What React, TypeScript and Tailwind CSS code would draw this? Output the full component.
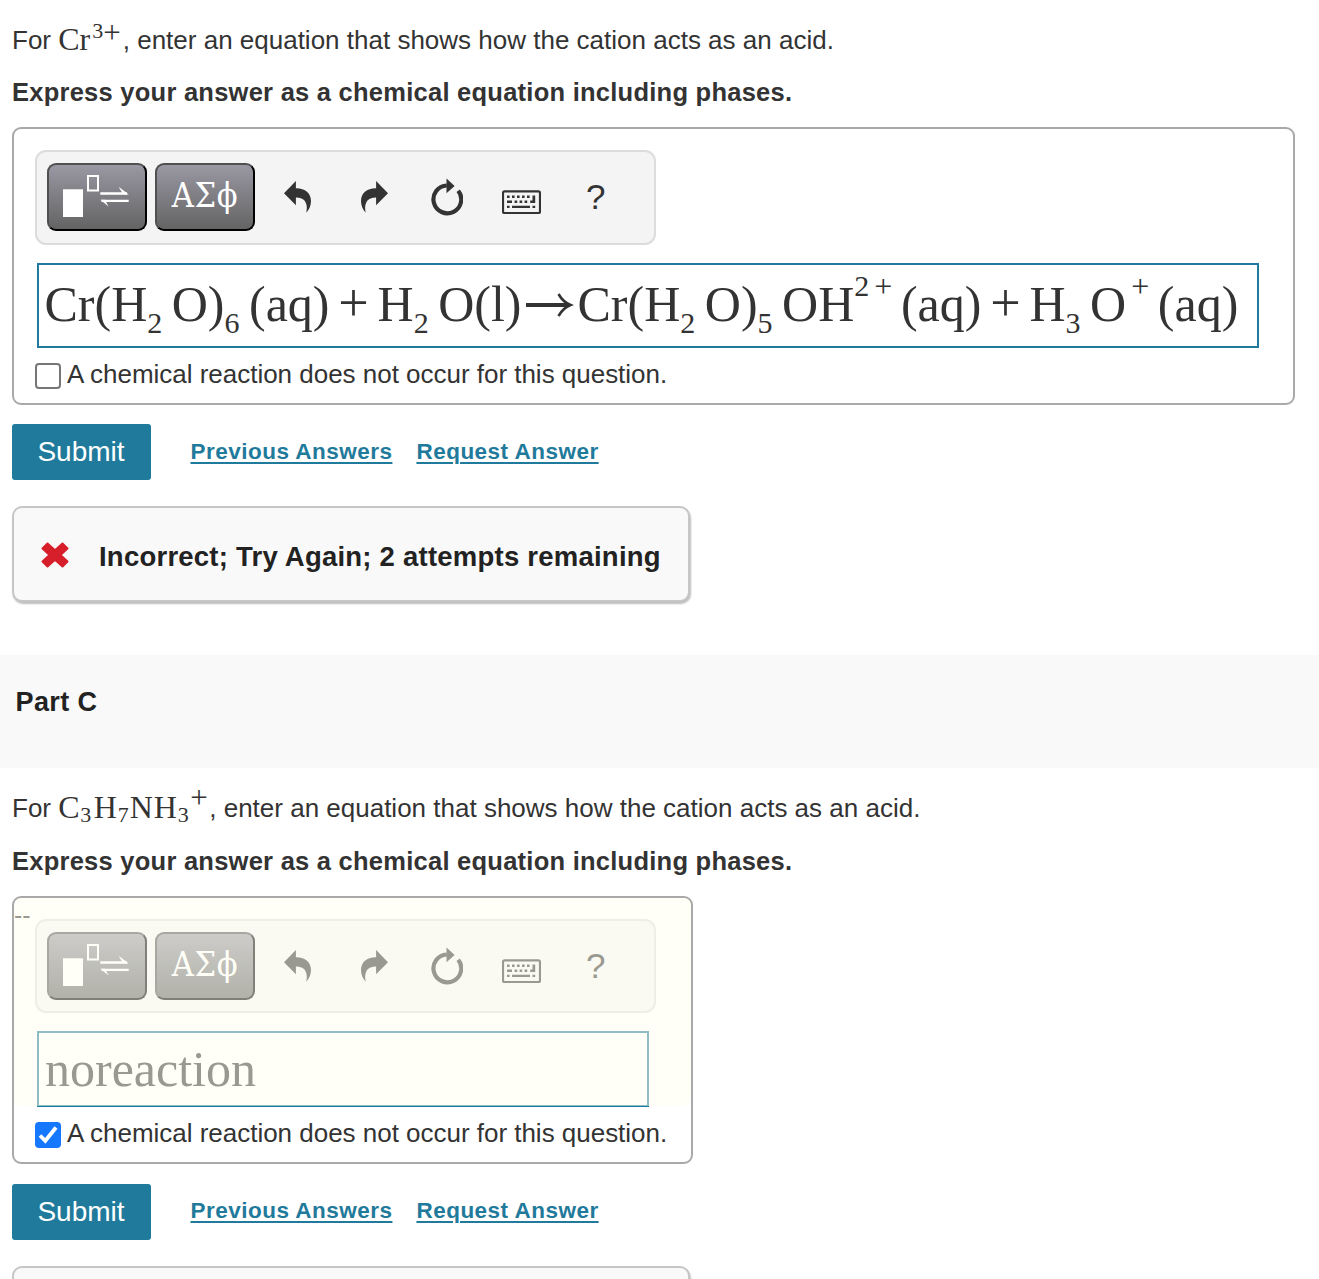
import React, { useState } from 'react';

const UndoIcon: React.FC<{ className?: string }> = ({ className }) => (
    <svg viewBox="0 0 27 32" className={className} fill="currentColor">
        <path d="M0 12.3 11.9 0V7.2C21 7 27 12 27 20c0 4.700-1.800 8.500-4.800 11.700C24 25 22.500 16 11.900 16.500V24.200Z" />
    </svg>
);

const ResetIcon: React.FC = () => (
    <svg viewBox="0 0 32 38" className="w-[32px] h-[38px] mt-[15px] ml-[43px]" fill="none">
        <path d="M15.800 7.500A13.900 13.900 0 1 0 27.200 12.700" stroke="currentColor" strokeWidth="4.200" />
        <path d="M15.500 .5 23.600 7.900 15.500 15.300Z" fill="currentColor" />
    </svg>
);

const KeyboardIcon: React.FC = () => (
    <svg viewBox="0 0 39 24" className="w-[39px] h-[24px] mt-[27px] ml-[38.500px]" fill="none">
        <rect x="1" y="1.300" width="37" height="21.700" rx="1.500" stroke="currentColor" strokeWidth="2.200" />
        <path
            d="M5 5.500h2.600v2.400H5zM10 5.500h2.600v2.400H10zM15 5.500h2.600v2.400H15zM20 5.500h2.600v2.400H20zM25 5.500h2.600v2.400H25zM30.500 5.500h2.700v7.500h-5v-2.400h2.300zM5 10.600h5v2.400H5zM12.600 10.600h2.600v2.400h-2.600zM17.600 10.600h2.600v2.400h-2.600zM22.600 10.600h2.600v2.400h-2.600zM5 15.700h2.600v2.400H5zM10 15.700h18v2.400H10zM30.500 15.700h2.700v2.400h-2.700z"
            fill="currentColor"
        />
    </svg>
);

const TemplateIcon: React.FC = () => (
    <svg viewBox="0 0 66 42" className="w-[66px] h-[42px] mt-[10px] ml-[14px] text-white" fill="none">
        <rect x="0" y="14.300" width="20" height="27.700" fill="currentColor" />
        <rect x="25" y="1" width="10" height="14.500" stroke="currentColor" strokeWidth="2" />
        <path d="M37.300 18.500H64M38.500 25.800H65.700" stroke="currentColor" strokeWidth="2.300" />
        <path d="M56 12 65.700 19.600H60.500L56.500 13.500ZM37.300 24.700 46.500 32.300 45.500 31.500 42 24.700Z" fill="currentColor" />
    </svg>
);

const toolButton =
    'flex shrink-0 w-[100px] h-[68px] rounded-[9px] border-2 border-t-[#505050] border-l-[#505050] border-r-black border-b-black bg-linear-to-b from-[#9a98a3] to-[#646464]';

const Toolbar: React.FC<{ className: string }> = ({ className }) => (
    <div className={`flex items-start w-[621px] rounded-[11px] border-2 border-[#dcdcdc] bg-[#f4f4f4] pt-[11px] pl-[10px] ${className}`}>
        <button className={toolButton} title="Templates">
            <TemplateIcon />
        </button>
        <button className={`${toolButton} ml-2 justify-center`} title="Symbols">
            <span className="font-['DejaVu_Serif_Condensed','DejaVu_Serif',serif] text-[34px] leading-[61px] tracking-[0.7px] text-white">ΑΣϕ</span>
        </button>
        <UndoIcon className="w-[27px] h-[32px] mt-[18px] ml-[29px]" />
        <UndoIcon className="w-[27px] h-[32px] mt-[18px] ml-[50px] -scale-x-100" />
        <ResetIcon />
        <KeyboardIcon />
        <span className="ml-[45.500px] text-[35px] leading-[68px]">?</span>
    </div>
);

type Token = { t: string; k?: 'sub' | 'sup' | 'op' | 'arrow' };

const tokens: Token[] = [
    { t: 'Cr(H' },
    { t: '2', k: 'sub' },
    { t: 'O)' },
    { t: '6', k: 'sub' },
    { t: '(aq)' },
    { t: '+', k: 'op' },
    { t: 'H' },
    { t: '2', k: 'sub' },
    { t: 'O(l)' },
    { t: '→', k: 'arrow' },
    { t: 'Cr(H' },
    { t: '2', k: 'sub' },
    { t: 'O)' },
    { t: '5', k: 'sub' },
    { t: 'OH' },
    { t: '2', k: 'sup' },
    { t: '+', k: 'sup' },
    { t: '(aq)' },
    { t: '+', k: 'op' },
    { t: 'H' },
    { t: '3', k: 'sub' },
    { t: 'O' },
    { t: '+', k: 'sup' },
    { t: '(aq)' },
];

const Equation: React.FC = () => (
    <div className="flex items-baseline whitespace-pre pl-[5.500px] font-['Liberation_Serif',serif] text-[50px] leading-[78px]">
        {tokens.map(({ t, k }, i) => {
            if (k === 'sub') {
                return <span key={i} className="relative top-[12px] mr-[9.500px] text-[30px] leading-none">{t}</span>;
            }
            if (k === 'sup') {
                return t === '+' ? (
                    <span key={i} className="relative -top-[24px] ml-[5px] mr-[8.600px] text-[32px] leading-none">{t}</span>
                ) : (
                    <span key={i} className="relative -top-[25px] text-[30px] leading-none">{t}</span>
                );
            }
            if (k === 'op') {
                return <span key={i} className="mx-[8.800px] text-[54px] leading-none">{t}</span>;
            }
            if (k === 'arrow') {
                return (
                    <svg key={i} viewBox="0 0 56 40" className="w-[56px] h-[40px] self-start mt-[20px]" fill="none" stroke="currentColor">
                        <path d="M4 20H47" strokeWidth="4" />
                        <path d="M36.500 9Q41 17 48.500 20Q41 23 36.500 31" strokeWidth="2.600" />
                    </svg>
                );
            }
            return <span key={i}>{t}</span>;
        })}
    </div>
);

const NoReaction: React.FC<{ checked: boolean; onToggle: () => void }> = ({ checked, onToggle }) => (
    <div className="flex items-start mt-[15px]">
        <button
            role="checkbox"
            aria-checked={checked}
            aria-label="No reaction"
            onClick={onToggle}
            className={`w-[26px] h-[26px] shrink-0 rounded-[4px] ${checked ? 'bg-[#1677ff]' : 'border-2 border-[#767676] bg-white'}`}
        >
            {checked && (
                <svg viewBox="0 0 26 26" className="w-[26px] h-[26px]" fill="none">
                    <path d="M5 13.500 10.300 18.800 21 5.500" stroke="white" strokeWidth="3.800" />
                </svg>
            )}
        </button>
        <span className="ml-[6px] whitespace-nowrap text-[26px] leading-[22px] tracking-[-0.02px]">
            A chemical reaction does not occur for this question.
        </span>
    </div>
);

const linkText = 'text-[22.500px] font-bold tracking-[0.48px] underline decoration-2 underline-offset-[3px]';

const Actions: React.FC<{ className?: string; linkClass: string }> = ({ className = '', linkClass }) => (
    <div className={`flex shrink-0 items-start ml-3 text-[#1f7a9b] ${className}`}>
        <button className="w-[139px] h-[56px] rounded-[3px] bg-[#1f7a9b] pr-[1px] text-[28px] leading-[56px] text-white">Submit</button>
        <a href="#" className={`ml-[39.500px] ${linkText} ${linkClass}`}>
            Previous Answers
        </a>
        <a href="#" className={`ml-6 ${linkText} ${linkClass}`}>
            Request Answer
        </a>
    </div>
);

const feedbackBox =
    'flex items-start shrink-0 ml-3 mt-[26px] w-[678px] h-[96px] rounded-[10px] border-2 border-[#c6c6c6] bg-[#f9f9f9] shadow-[1px_2px_2px_#bdbdbd]';

const mathText = "relative top-[1px] font-['Liberation_Serif',serif] leading-none";

const App: React.FC = () => {
    const [noneB, setNoneB] = useState(false);
    const [noneC, setNoneC] = useState(true);

    return (
        <div className="flex flex-col h-[1279px] overflow-hidden bg-white font-['Liberation_Sans',Arial,sans-serif] text-[26px] text-[#333]">
            <p className="shrink-0 h-[52px] mt-[14px] ml-3 leading-[52px] whitespace-pre">
                For{' '}
                <span className={mathText}>
                    <span className="inline-block w-[34px] text-[32px]">Cr</span>
                    <span className="relative -top-[12px] inline-block w-[11px] text-[22px]">3</span>
                    <span className="relative -top-[7px] inline-block w-[19.500px] text-[31px]">+</span>
                </span>
                , enter an equation that shows how the cation acts as an acid.
            </p>
            <p className="shrink-0 h-[52px] ml-3 leading-[52px] text-[25.500px] font-bold tracking-[0.25px]">
                Express your answer as a chemical equation including phases.
            </p>

            <div className="shrink-0 w-[1283px] h-[278px] ml-3 mt-[9px] rounded-[9px] border-2 border-[#a9a9a9] pt-[21px] pl-[21px]">
                <Toolbar className="h-[95px]" />
                <div className="w-[1222px] h-[85px] mt-[18px] ml-[2px] border-2 border-[#1f7a9b]">
                    <Equation />
                </div>
                <NoReaction checked={noneB} onToggle={() => setNoneB(!noneB)} />
            </div>

            <Actions className="mt-[19px]" linkClass="leading-[55px]" />
            <div className={feedbackBox}>
                <svg viewBox="0 0 28 26" className="w-[28px] h-[26px] ml-[27px] mt-[34px]">
                    <path
                        d="M6.500 1.500 14 8.300 21.500 1.500 26.500 6.500 19.500 13 26.500 19.500 21.500 24.500 14 17.700 6.500 24.500 1.500 19.500 8.500 13 1.500 6.500Z"
                        fill="#d61f2a"
                        stroke="#d61f2a"
                        strokeWidth="2"
                        strokeLinejoin="round"
                    />
                </svg>
                <span className="ml-[30px] whitespace-nowrap text-[27.500px] leading-[98px] font-bold tracking-[0.23px] text-[#222]">
                    Incorrect; Try Again; 2 attempts remaining
                </span>
            </div>

            <div className="shrink-0 h-[113px] mt-[53px] bg-[#f9f9f9] pl-[15.500px]">
                <h2 className="text-[27px] leading-[94px] font-bold tracking-[0.4px] text-[#222]">Part C</h2>
            </div>

            <p className="shrink-0 h-[53px] mt-[14px] ml-3 leading-[52px] whitespace-pre">
                For{' '}
                <span className={`${mathText} text-[32px]`}>
                    <span className="inline-block w-[22px]">C</span>
                    <span className="relative top-[4px] inline-block w-[13.500px] text-[22px]">3</span>
                    <span className="inline-block w-[24px]">H</span>
                    <span className="relative top-[4px] inline-block w-[12px] text-[22px]">7</span>
                    <span className="inline-block w-[24px]">N</span>
                    <span className="inline-block w-[24px]">H</span>
                    <span className="relative top-[4px] inline-block w-[12.500px] text-[22px]">3</span>
                    <span className="relative -top-[10px] inline-block w-[19px] text-[31px]">+</span>
                </span>
                , enter an equation that shows how the cation acts as an acid.
            </p>
            <p className="shrink-0 h-[52px] ml-3 leading-[52px] text-[25.500px] font-bold tracking-[0.25px]">
                Express your answer as a chemical equation including phases.
            </p>

            <div className="relative shrink-0 w-[681px] h-[268px] ml-3 mt-[9px] rounded-[9px] border-2 border-[#a9a9a9] pt-[21px] pl-[21px]">
                <span className="absolute left-0 top-[4px] text-[25px] leading-[26px]">--</span>
                <Toolbar className="h-[94px]" />
                <div className="w-[612px] h-[76px] mt-[18px] ml-[2px] border-2 border-[#1f7a9b] pl-[6px] font-['Liberation_Serif',serif] text-[50px] leading-[72px]">
                    noreaction
                </div>
                <NoReaction checked={noneC} onToggle={() => setNoneC(!noneC)} />
                {/* veil over the editor while "no reaction" is on */}
                {noneC && <div className="absolute left-0 top-0 w-[677px] h-[208px] rounded-[8px] bg-[#fffff0]/50" />}
            </div>

            <Actions className="mt-[20px]" linkClass="leading-[53px]" />
            <div className={feedbackBox} />
        </div>
    );
};

export default App;
